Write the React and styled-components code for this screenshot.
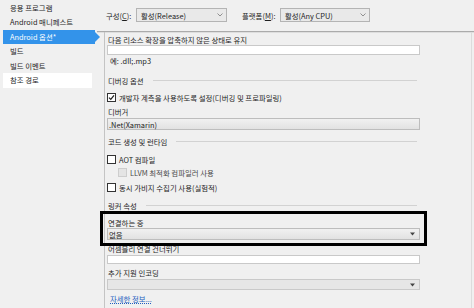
import React from 'react'
import styled, {createGlobalStyle} from 'styled-components'

const GlobalStyle = createGlobalStyle`
    html, body {
        margin: 0;
        padding: 0;
        background: #f0f0f0;
    }
    body {
        font-family: "Noto Sans CJK KR", "Noto Sans", sans-serif;
        font-size: 7.4px;
        color: #1e1e1e;
    }
`;

const Page = styled.div`
    display: flex;
    width: 474px;
    height: 308px;
    overflow: hidden;
    background: #f0f0f0;
`;

const Sidebar = styled.div`
    width: 97px;
    flex-shrink: 0;
    padding: 0.5px 0 0 3px;
    box-sizing: border-box;
`;

const NavItem = styled.div`
    position: relative;
    height: 14.5px;
    line-height: 14.5px;
    width: ${p => p.$active ? '92px' : '89px'};
    padding-left: 7px;
    box-sizing: border-box;
    white-space: nowrap;
    background: ${p => p.$active ? '#3393ea' : p.$white ? '#ffffff' : 'transparent'};
    color: ${p => p.$active ? '#ffffff' : '#1e1e1e'};

    &::after {
        content: '';
        display: ${p => p.$active ? 'block' : 'none'};
        position: absolute;
        right: -5px;
        top: 2px;
        border-left: 5px solid #3393ea;
        border-top: 5.25px solid transparent;
        border-bottom: 5.25px solid transparent;
    }
`;

const Main = styled.div`
    flex: 1;
    display: flex;
    flex-direction: column;
`;

const Toolbar = styled.div`
    height: 32px;
    display: flex;
    align-items: center;
    padding: 0 0 1px 9px;
    box-sizing: border-box;
    border-bottom: 1px solid #ababab;
    box-shadow: 0 1px 0 #dedede;
`;

const ToolLabel = styled.span`
    width: ${p => p.$w}px;
    margin-left: ${p => p.$ml || 0}px;
    flex-shrink: 0;
    white-space: nowrap;
    & u { text-decoration: underline; }
`;

const TopSelect = styled.div`
    width: ${p => p.$w}px;
    height: 14px;
    box-sizing: border-box;
    border: 1px solid #b4b4b4;
    background: #e9e9e9;
    display: flex;
    align-items: center;
    justify-content: space-between;
    padding: 0 3px 0 4px;
`;

const Body = styled.div`
    flex: 1;
    display: flex;
    padding-left: 7px;
`;

const Panel = styled.div`
    width: 368px;
    border-left: 1px solid #c4c4c4;
    border-right: 1px solid #dcdcdc;
    box-sizing: border-box;
    padding: 3px 51px 0 2px;
    display: flex;
    flex-direction: column;
`;

const Label = styled.div`
    height: ${p => p.$h || 10}px;
    line-height: ${p => p.$h || 10}px;
    margin-top: ${p => p.$mt || 0}px;
    white-space: nowrap;
    padding-left: ${p => p.$pl || 1}px;
`;

const TextBox = styled.div`
    height: ${p => p.$h || 10}px;
    margin-top: ${p => p.$mt || 0}px;
    box-sizing: border-box;
    border: 1px solid #c9c9c9;
    background: #ffffff;
`;

const Select = styled.div`
    height: ${p => p.$h || 12}px;
    margin-top: ${p => p.$mt || 0}px;
    box-sizing: border-box;
    border: 1px solid ${p => p.$disabled ? '#c9c9c9' : '#bdbdbd'};
    background: ${p => p.$disabled ? '#e6e6e6' : 'linear-gradient(#f1f1f1, #e2e2e2)'};
    display: flex;
    align-items: center;
    justify-content: space-between;
    padding: 0 4px 0 1px;
    white-space: nowrap;
`;

const Section = styled.div`
    height: 14px;
    margin-top: ${p => p.$mt || 0}px;
    display: flex;
    align-items: center;
    padding-left: 1px;
    margin-right: 3px;
    white-space: nowrap;

    &::after {
        content: '';
        flex: 1;
        height: 1px;
        margin-left: ${p => p.$gap || 8}px;
        background: #d2d2d2;
    }
`;

const CheckRow = styled.label`
    height: 12px;
    margin-top: ${p => p.$mt || 0}px;
    padding-left: ${p => p.$indent ? 11 : 0}px;
    display: flex;
    align-items: center;
    gap: 3px;
    white-space: nowrap;
    color: ${p => p.$disabled ? '#4a4a4a' : '#1e1e1e'};
`;

const Box = styled.span`
    width: 9px;
    height: 9px;
    box-sizing: border-box;
    border: 1px solid ${p => p.$disabled ? '#cdcdcd' : '#333333'};
    background: ${p => p.$disabled ? '#e4e4e4' : '#ffffff'};
    display: flex;
    align-items: center;
    justify-content: center;
    flex-shrink: 0;
`;

const Highlight = styled.div`
    position: relative;
    margin-top: ${p => p.$mt || 0}px;

    &::after {
        content: '';
        position: absolute;
        left: -7px;
        right: -7px;
        top: -7px;
        bottom: -6px;
        border: 3px solid #000000;
        pointer-events: none;
    }
`;

const Link = styled.div`
    margin-top: 4px;
    height: 10px;
    line-height: 10px;
    padding-left: 3px;
    color: #1f5fbf;
    text-decoration: underline;
    text-decoration-style: dotted;
`;

const Chevron = ({filled}) => (
    filled
        ? <svg width="5" height="4" viewBox="0 0 5 4"><path d="M0 0.5 L5 0.5 L2.5 3.5 Z" fill="#444"/></svg>
        : <svg width="6" height="4" viewBox="0 0 6 4"><path d="M0.5 0.5 L3 3 L5.5 0.5" fill="none" stroke="#777" strokeWidth="0.8"/></svg>
);

const Check = () => (
    <svg width="7" height="7" viewBox="0 0 7 7">
        <path d="M1 3.6 L2.8 5.4 L6 1.4" fill="none" stroke="#222" strokeWidth="1.3"/>
    </svg>
);

const navItems = ['응용 프로그램', 'Android 매니페스트', 'Android 옵션*', '빌드', '빌드 이벤트', '참조 경로'];

const App = () => {
    return (
        <Page>
            <GlobalStyle/>
            <Sidebar>
                {navItems.map((n, i) => (
                    <NavItem key={n} $active={i === 2} $white={i === 5}>{n}</NavItem>
                ))}
            </Sidebar>
            <Main>
                <Toolbar>
                    <ToolLabel $w={30}>구성(<u>C</u>):</ToolLabel>
                    <TopSelect $w={91}><span>활성(Release)</span><Chevron/></TopSelect>
                    <ToolLabel $w={38} $ml={15}>플랫폼(<u>M</u>):</ToolLabel>
                    <TopSelect $w={90}><span>활성(Any CPU)</span><Chevron/></TopSelect>
                </Toolbar>
                <Body>
                    <Panel>
                        <Label>다음 리소스 확장을 압축하지 않은 상태로 유지</Label>
                        <TextBox/>
                        <Label $pl={3} $h={11}>예: .dll;.mp3</Label>
                        <Section $mt={7} $gap={9}>디버깅 옵션</Section>
                        <CheckRow $mt={4}><Box><Check/></Box>개발자 계측을 사용하도록 설정(디버깅 및 프로파일링)</CheckRow>
                        <Label $mt={4}>디버거</Label>
                        <Select $mt={1}><span>.Net(Xamarin)</span></Select>
                        <Section $mt={4} $gap={9}>코드 생성 및 런타임</Section>
                        <CheckRow $mt={5}><Box/>AOT 컴파일</CheckRow>
                        <CheckRow $mt={1} $indent $disabled><Box $disabled/>LLVM 최적화 컴파일러 사용</CheckRow>
                        <CheckRow $mt={3}><Box/>동시 가비지 수집기 사용(실험적)</CheckRow>
                        <Section $mt={5} $gap={9}>링커 속성</Section>
                        <Highlight $mt={6}>
                            <Label>연결하는 중</Label>
                            <Select><span>없음</span><Chevron filled/></Select>
                        </Highlight>
                        <Label $mt={4}>어셈블리 연결 건너뛰기</Label>
                        <TextBox $h={9} $mt={1}/>
                        <Label $mt={4}>추가 지원 인코딩</Label>
                        <Select $mt={1} $h={11} $disabled><span></span><Chevron filled/></Select>
                        <Link>자세한 정보...</Link>
                    </Panel>
                </Body>
            </Main>
        </Page>
    )
}

export default App;
